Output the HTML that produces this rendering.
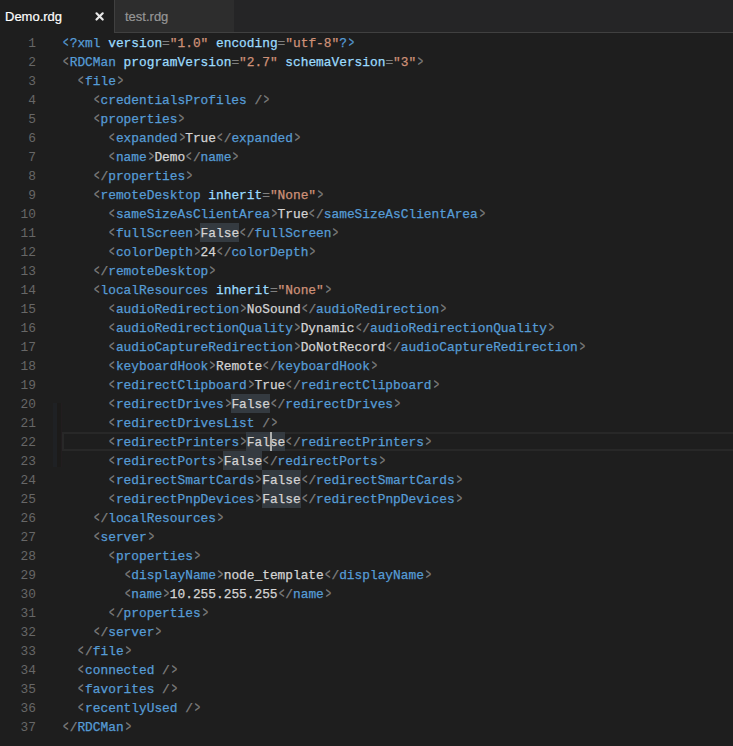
<!DOCTYPE html>
<html><head><meta charset="utf-8">
<style>
html,body{margin:0;padding:0;width:733px;height:746px;overflow:hidden;background:#1e1e1e;}
#tabs{position:absolute;left:0;top:0;width:733px;height:33px;background:#252526;}
#tabline{position:absolute;left:114px;top:32px;width:619px;height:1px;background:#404040;}
.tab{position:absolute;top:0;height:33px;font-family:"Liberation Sans",sans-serif;font-size:13px;}
#t1{left:0;width:114px;background:#1e1e1e;color:#ffffff;}
#t2{left:114px;width:119px;height:32px;background:#2d2d2d;color:#969696;border-left:1px solid #404040;}
.tab span{position:absolute;top:9px;white-space:nowrap;-webkit-text-stroke:0.2px currentColor;}
#gut{position:absolute;left:0;top:34px;width:62px;}
.nm{position:absolute;right:26px;height:19px;line-height:19px;font-family:"Liberation Mono",monospace;font-size:12.83px;color:#676767;}
#ed{position:absolute;left:62px;top:33px;right:0;bottom:0;}
#cur{position:absolute;left:0;right:0;top:399px;height:15px;border:2px solid #282828;border-right:none;}
.hb{position:absolute;width:39px;height:19px;background:#343a40;}
#caret{position:absolute;left:208px;top:399px;width:2px;height:19px;background:#aeafad;}
#txt{position:absolute;left:0;top:1px;right:0;bottom:0;}
.ln{position:absolute;left:0;height:19px;line-height:19px;white-space:pre;-webkit-text-stroke:0.25px currentColor;font-family:"Liberation Mono",monospace;font-size:12.83px;color:#d4d4d4;}
.ang{font-style:normal;display:inline-block;transform:scale(0.7,1.18);transform-origin:45% 58%;}
.gt{transform:translateX(0.8px) scale(0.7,1.18);}
.t{color:#569cd6}.a{color:#9cdcfe}.s{color:#ce9178}.b{color:#808080}.x{color:#d4d4d4}
#art1{position:absolute;left:53px;top:403px;width:4px;height:64px;background:#1f2124;}
#art2{position:absolute;left:57px;top:403px;width:4px;height:64px;background:#1c1b1a;}
#art3{position:absolute;left:61px;top:403px;width:1px;height:64px;background:#221d1f;}
</style></head><body>
<div id="tabs">
<div class="tab" id="t1"><span style="left:5px">Demo.rdg</span>
<svg style="position:absolute;left:94px;top:11px" width="11" height="11" viewBox="0 0 11 11"><path d="M2.5 2.3L8.7 8.5M8.7 2.3L2.5 8.5" stroke="#e8e8e8" stroke-width="2.2" stroke-linecap="round"/></svg></div>
<div class="tab" id="t2"><span style="left:10px">test.rdg</span></div>
<div id="tabline"></div>
</div>
<div id="art1"></div><div id="art2"></div><div id="art3"></div>
<div id="gut">
<div class="nm" style="top:0px">1</div>
<div class="nm" style="top:19px">2</div>
<div class="nm" style="top:38px">3</div>
<div class="nm" style="top:57px">4</div>
<div class="nm" style="top:76px">5</div>
<div class="nm" style="top:95px">6</div>
<div class="nm" style="top:114px">7</div>
<div class="nm" style="top:133px">8</div>
<div class="nm" style="top:152px">9</div>
<div class="nm" style="top:171px">10</div>
<div class="nm" style="top:190px">11</div>
<div class="nm" style="top:209px">12</div>
<div class="nm" style="top:228px">13</div>
<div class="nm" style="top:247px">14</div>
<div class="nm" style="top:266px">15</div>
<div class="nm" style="top:285px">16</div>
<div class="nm" style="top:304px">17</div>
<div class="nm" style="top:323px">18</div>
<div class="nm" style="top:342px">19</div>
<div class="nm" style="top:361px">20</div>
<div class="nm" style="top:380px">21</div>
<div class="nm" style="top:399px">22</div>
<div class="nm" style="top:418px">23</div>
<div class="nm" style="top:437px">24</div>
<div class="nm" style="top:456px">25</div>
<div class="nm" style="top:475px">26</div>
<div class="nm" style="top:494px">27</div>
<div class="nm" style="top:513px">28</div>
<div class="nm" style="top:532px">29</div>
<div class="nm" style="top:551px">30</div>
<div class="nm" style="top:570px">31</div>
<div class="nm" style="top:589px">32</div>
<div class="nm" style="top:608px">33</div>
<div class="nm" style="top:627px">34</div>
<div class="nm" style="top:646px">35</div>
<div class="nm" style="top:665px">36</div>
<div class="nm" style="top:684px">37</div>
</div>
<div id="ed">
<div id="cur"></div>
<div class="hb" style="top:190px;left:138px"></div>
<div class="hb" style="top:361px;left:169px"></div>
<div class="hb" style="top:399px;left:184px"></div>
<div class="hb" style="top:418px;left:161px"></div>
<div class="hb" style="top:437px;left:200px"></div>
<div class="hb" style="top:456px;left:200px"></div>
<div id="txt">
<div class="ln" style="top:0px"><span class="t"><i class="ang">&lt;</i>?xml</span> <span class="a">version</span><span class="b">=</span><span class="s">&quot;1.0&quot;</span> <span class="a">encoding</span><span class="b">=</span><span class="s">&quot;utf-8&quot;</span><span class="t">?<i class="ang gt">&gt;</i></span></div>
<div class="ln" style="top:19px"><span class="b"><i class="ang">&lt;</i></span><span class="t">RDCMan</span> <span class="a">programVersion</span><span class="b">=</span><span class="s">&quot;2.7&quot;</span> <span class="a">schemaVersion</span><span class="b">=</span><span class="s">&quot;3&quot;</span><span class="b"><i class="ang gt">&gt;</i></span></div>
<div class="ln" style="top:38px">  <span class="b"><i class="ang">&lt;</i></span><span class="t">file</span><span class="b"><i class="ang gt">&gt;</i></span></div>
<div class="ln" style="top:57px">    <span class="b"><i class="ang">&lt;</i></span><span class="t">credentialsProfiles</span> <span class="b">/<i class="ang gt">&gt;</i></span></div>
<div class="ln" style="top:76px">    <span class="b"><i class="ang">&lt;</i></span><span class="t">properties</span><span class="b"><i class="ang gt">&gt;</i></span></div>
<div class="ln" style="top:95px">      <span class="b"><i class="ang">&lt;</i></span><span class="t">expanded</span><span class="b"><i class="ang gt">&gt;</i></span><span class="x">True</span><span class="b"><i class="ang">&lt;</i>/</span><span class="t">expanded</span><span class="b"><i class="ang gt">&gt;</i></span></div>
<div class="ln" style="top:114px">      <span class="b"><i class="ang">&lt;</i></span><span class="t">name</span><span class="b"><i class="ang gt">&gt;</i></span><span class="x">Demo</span><span class="b"><i class="ang">&lt;</i>/</span><span class="t">name</span><span class="b"><i class="ang gt">&gt;</i></span></div>
<div class="ln" style="top:133px">    <span class="b"><i class="ang">&lt;</i>/</span><span class="t">properties</span><span class="b"><i class="ang gt">&gt;</i></span></div>
<div class="ln" style="top:152px">    <span class="b"><i class="ang">&lt;</i></span><span class="t">remoteDesktop</span> <span class="a">inherit</span><span class="b">=</span><span class="s">&quot;None&quot;</span><span class="b"><i class="ang gt">&gt;</i></span></div>
<div class="ln" style="top:171px">      <span class="b"><i class="ang">&lt;</i></span><span class="t">sameSizeAsClientArea</span><span class="b"><i class="ang gt">&gt;</i></span><span class="x">True</span><span class="b"><i class="ang">&lt;</i>/</span><span class="t">sameSizeAsClientArea</span><span class="b"><i class="ang gt">&gt;</i></span></div>
<div class="ln" style="top:190px">      <span class="b"><i class="ang">&lt;</i></span><span class="t">fullScreen</span><span class="b"><i class="ang gt">&gt;</i></span><span class="x">False</span><span class="b"><i class="ang">&lt;</i>/</span><span class="t">fullScreen</span><span class="b"><i class="ang gt">&gt;</i></span></div>
<div class="ln" style="top:209px">      <span class="b"><i class="ang">&lt;</i></span><span class="t">colorDepth</span><span class="b"><i class="ang gt">&gt;</i></span><span class="x">24</span><span class="b"><i class="ang">&lt;</i>/</span><span class="t">colorDepth</span><span class="b"><i class="ang gt">&gt;</i></span></div>
<div class="ln" style="top:228px">    <span class="b"><i class="ang">&lt;</i>/</span><span class="t">remoteDesktop</span><span class="b"><i class="ang gt">&gt;</i></span></div>
<div class="ln" style="top:247px">    <span class="b"><i class="ang">&lt;</i></span><span class="t">localResources</span> <span class="a">inherit</span><span class="b">=</span><span class="s">&quot;None&quot;</span><span class="b"><i class="ang gt">&gt;</i></span></div>
<div class="ln" style="top:266px">      <span class="b"><i class="ang">&lt;</i></span><span class="t">audioRedirection</span><span class="b"><i class="ang gt">&gt;</i></span><span class="x">NoSound</span><span class="b"><i class="ang">&lt;</i>/</span><span class="t">audioRedirection</span><span class="b"><i class="ang gt">&gt;</i></span></div>
<div class="ln" style="top:285px">      <span class="b"><i class="ang">&lt;</i></span><span class="t">audioRedirectionQuality</span><span class="b"><i class="ang gt">&gt;</i></span><span class="x">Dynamic</span><span class="b"><i class="ang">&lt;</i>/</span><span class="t">audioRedirectionQuality</span><span class="b"><i class="ang gt">&gt;</i></span></div>
<div class="ln" style="top:304px">      <span class="b"><i class="ang">&lt;</i></span><span class="t">audioCaptureRedirection</span><span class="b"><i class="ang gt">&gt;</i></span><span class="x">DoNotRecord</span><span class="b"><i class="ang">&lt;</i>/</span><span class="t">audioCaptureRedirection</span><span class="b"><i class="ang gt">&gt;</i></span></div>
<div class="ln" style="top:323px">      <span class="b"><i class="ang">&lt;</i></span><span class="t">keyboardHook</span><span class="b"><i class="ang gt">&gt;</i></span><span class="x">Remote</span><span class="b"><i class="ang">&lt;</i>/</span><span class="t">keyboardHook</span><span class="b"><i class="ang gt">&gt;</i></span></div>
<div class="ln" style="top:342px">      <span class="b"><i class="ang">&lt;</i></span><span class="t">redirectClipboard</span><span class="b"><i class="ang gt">&gt;</i></span><span class="x">True</span><span class="b"><i class="ang">&lt;</i>/</span><span class="t">redirectClipboard</span><span class="b"><i class="ang gt">&gt;</i></span></div>
<div class="ln" style="top:361px">      <span class="b"><i class="ang">&lt;</i></span><span class="t">redirectDrives</span><span class="b"><i class="ang gt">&gt;</i></span><span class="x">False</span><span class="b"><i class="ang">&lt;</i>/</span><span class="t">redirectDrives</span><span class="b"><i class="ang gt">&gt;</i></span></div>
<div class="ln" style="top:380px">      <span class="b"><i class="ang">&lt;</i></span><span class="t">redirectDrivesList</span> <span class="b">/<i class="ang gt">&gt;</i></span></div>
<div class="ln" style="top:399px">      <span class="b"><i class="ang">&lt;</i></span><span class="t">redirectPrinters</span><span class="b"><i class="ang gt">&gt;</i></span><span class="x">False</span><span class="b"><i class="ang">&lt;</i>/</span><span class="t">redirectPrinters</span><span class="b"><i class="ang gt">&gt;</i></span></div>
<div class="ln" style="top:418px">      <span class="b"><i class="ang">&lt;</i></span><span class="t">redirectPorts</span><span class="b"><i class="ang gt">&gt;</i></span><span class="x">False</span><span class="b"><i class="ang">&lt;</i>/</span><span class="t">redirectPorts</span><span class="b"><i class="ang gt">&gt;</i></span></div>
<div class="ln" style="top:437px">      <span class="b"><i class="ang">&lt;</i></span><span class="t">redirectSmartCards</span><span class="b"><i class="ang gt">&gt;</i></span><span class="x">False</span><span class="b"><i class="ang">&lt;</i>/</span><span class="t">redirectSmartCards</span><span class="b"><i class="ang gt">&gt;</i></span></div>
<div class="ln" style="top:456px">      <span class="b"><i class="ang">&lt;</i></span><span class="t">redirectPnpDevices</span><span class="b"><i class="ang gt">&gt;</i></span><span class="x">False</span><span class="b"><i class="ang">&lt;</i>/</span><span class="t">redirectPnpDevices</span><span class="b"><i class="ang gt">&gt;</i></span></div>
<div class="ln" style="top:475px">    <span class="b"><i class="ang">&lt;</i>/</span><span class="t">localResources</span><span class="b"><i class="ang gt">&gt;</i></span></div>
<div class="ln" style="top:494px">    <span class="b"><i class="ang">&lt;</i></span><span class="t">server</span><span class="b"><i class="ang gt">&gt;</i></span></div>
<div class="ln" style="top:513px">      <span class="b"><i class="ang">&lt;</i></span><span class="t">properties</span><span class="b"><i class="ang gt">&gt;</i></span></div>
<div class="ln" style="top:532px">        <span class="b"><i class="ang">&lt;</i></span><span class="t">displayName</span><span class="b"><i class="ang gt">&gt;</i></span><span class="x">node_template</span><span class="b"><i class="ang">&lt;</i>/</span><span class="t">displayName</span><span class="b"><i class="ang gt">&gt;</i></span></div>
<div class="ln" style="top:551px">        <span class="b"><i class="ang">&lt;</i></span><span class="t">name</span><span class="b"><i class="ang gt">&gt;</i></span><span class="x">10.255.255.255</span><span class="b"><i class="ang">&lt;</i>/</span><span class="t">name</span><span class="b"><i class="ang gt">&gt;</i></span></div>
<div class="ln" style="top:570px">      <span class="b"><i class="ang">&lt;</i>/</span><span class="t">properties</span><span class="b"><i class="ang gt">&gt;</i></span></div>
<div class="ln" style="top:589px">    <span class="b"><i class="ang">&lt;</i>/</span><span class="t">server</span><span class="b"><i class="ang gt">&gt;</i></span></div>
<div class="ln" style="top:608px">  <span class="b"><i class="ang">&lt;</i>/</span><span class="t">file</span><span class="b"><i class="ang gt">&gt;</i></span></div>
<div class="ln" style="top:627px">  <span class="b"><i class="ang">&lt;</i></span><span class="t">connected</span> <span class="b">/<i class="ang gt">&gt;</i></span></div>
<div class="ln" style="top:646px">  <span class="b"><i class="ang">&lt;</i></span><span class="t">favorites</span> <span class="b">/<i class="ang gt">&gt;</i></span></div>
<div class="ln" style="top:665px">  <span class="b"><i class="ang">&lt;</i></span><span class="t">recentlyUsed</span> <span class="b">/<i class="ang gt">&gt;</i></span></div>
<div class="ln" style="top:684px"><span class="b"><i class="ang">&lt;</i>/</span><span class="t">RDCMan</span><span class="b"><i class="ang gt">&gt;</i></span></div>
</div>
<div id="caret"></div>
</div>
</body></html>
